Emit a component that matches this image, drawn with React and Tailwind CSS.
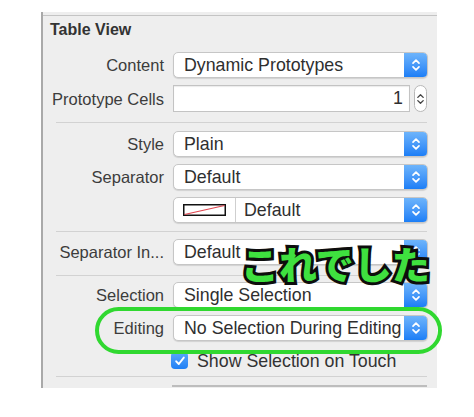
import React from "react";

const font = { fontFamily: '"Liberation Sans", Arial, sans-serif' };

function Chevrons({ color = "white", w = 10, h = 16, sw = 1.7 }) {
  return (
    <svg width={w} height={h} viewBox="0 0 10 16" fill="none">
      <path d="M2 6.2 L5 3.2 L8 6.2" stroke={color} strokeWidth={sw} strokeLinecap="round" strokeLinejoin="round" />
      <path d="M2 9.8 L5 12.8 L8 9.8" stroke={color} strokeWidth={sw} strokeLinecap="round" strokeLinejoin="round" />
    </svg>
  );
}

function Popup({ children, className = "" }) {
  return (
    <div className={"ml-[9px] flex h-[26px] w-[255px] overflow-hidden rounded-[5px] border border-[#c6c6c6] bg-white shadow-[0_1px_1px_rgba(0,0,0,0.12)] " + className}>
      <div className="flex min-w-0 flex-1 items-center">{children}</div>
      <div className="flex w-[23px] items-center justify-center bg-gradient-to-b from-[#6db4fb] to-[#1b7ef6]">
        <Chevrons />
      </div>
    </div>
  );
}

function Label({ children }) {
  return <div className="w-[121px] shrink-0 text-right text-[16.5px] leading-[20px] text-[#3c3c3c] whitespace-nowrap">{children}</div>;
}

function Row({ label, children, className = "" }) {
  return (
    <div className={"flex h-[26px] items-center " + className}>
      <Label>{label}</Label>
      {children}
    </div>
  );
}

function Text({ children }) {
  return <span className="pl-[10px] text-[17.8px] leading-[20px] text-[#2f2f2f] whitespace-nowrap">{children}</span>;
}

function Line({ className = "" }) {
  return <div className={"ml-[13px] h-px w-[371px] bg-[#d2d2d2] " + className} />;
}

export default function App() {
  return (
    <div className="relative h-[417px] w-[474px] overflow-hidden bg-white" style={font}>
      <div className="ml-[41px] mt-[12px] flex h-[376px] w-[396px] flex-col border-l-2 border-[#a9a9a9] bg-[#eeeeee]">
        <div className="mt-[3px] h-px w-full bg-[#c4c4c4]" />
        <div className="ml-[7px] mt-[4px] text-[16px] font-bold leading-[20px] text-[#333]">Table View</div>

        <Row label="Content" className="mt-[12px]">
          <Popup><Text>Dynamic Prototypes</Text></Popup>
        </Row>

        <div className="mt-[7px] flex h-[27px] items-center">
          <Label>Prototype Cells</Label>
          <div className="ml-[9px] flex h-[27px] w-[237px] items-center justify-end border border-[#c3c3c3] bg-white pr-[6px] text-[17.8px] text-[#2f2f2f] shadow-[inset_0_1px_1px_rgba(0,0,0,0.08)]">1</div>
          <div className="ml-[4px] flex h-[27px] w-[13px] items-center justify-center rounded-[7px] border border-[#b8b8b8] bg-white">
            <Chevrons color="#444" w={9} h={16} sw={1.5} />
          </div>
        </div>

        <Line className="mt-[10px]" />

        <Row label="Style" className="mt-[8px]">
          <Popup><Text>Plain</Text></Popup>
        </Row>
        <Row label="Separator" className="mt-[7px]">
          <Popup><Text>Default</Text></Popup>
        </Row>
        <Row label="" className="mt-[7px]">
          <Popup>
            <div className="flex h-full w-[62px] items-center justify-center border-r border-[#cfcfcf]">
              <svg width="43" height="12" viewBox="0 0 43 12">
                <rect x="0.75" y="0.75" width="41.5" height="10.5" fill="white" stroke="#111" strokeWidth="1.5" />
                <line x1="1.5" y1="10.5" x2="41.5" y2="1.5" stroke="#e0454f" strokeWidth="1.2" />
              </svg>
            </div>
            <span className="pl-[8px] text-[17.8px] leading-[20px] text-[#2f2f2f]">Default</span>
          </Popup>
        </Row>

        <Line className="mt-[8px]" />

        <Row label="Separator In..." className="mt-[7px]">
          <Popup><Text>Default</Text></Popup>
        </Row>

        <Line className="mt-[10px]" />

        <Row label="Selection" className="mt-[6px]">
          <Popup><Text>Single Selection</Text></Popup>
        </Row>
        <Row label="Editing" className="mt-[7px]">
          <Popup><Text>No Selection During Editing</Text></Popup>
        </Row>

        <div className="mt-[11px] flex h-[17px] items-center">
          <div className="ml-[128px] flex h-[17px] w-[17px] items-center justify-center rounded-[4px] bg-gradient-to-b from-[#5aa8fa] to-[#1f7ff5]">
            <svg width="12" height="12" viewBox="0 0 12 12" fill="none">
              <path d="M2.2 6.3 L4.8 9 L9.8 2.6" stroke="white" strokeWidth="1.9" strokeLinecap="round" strokeLinejoin="round" />
            </svg>
          </div>
          <span className="ml-[9px] text-[17.8px] leading-[20px] text-[#333] whitespace-nowrap">Show Selection on Touch</span>
        </div>

        <Line className="mt-[7px]" />

        <div className="ml-[129px] mt-[8px] h-[2px] w-[255px] bg-[#bdbdbd]" />
      </div>

      {/* green highlight */}
      <div className="absolute left-[95px] top-[307px] h-[47px] w-[347px] rounded-[24px] border-4 border-[#30d830]" />

      <div
        className="absolute left-[241px] top-[244px] text-[38px] font-black leading-none text-[#3fe03f] whitespace-nowrap [-webkit-text-stroke:6px_#0d0d0d] [paint-order:stroke_fill]"
        style={{ fontFamily: '"Noto Sans CJK JP", sans-serif' }}
      >
        これでした
      </div>
    </div>
  );
}
